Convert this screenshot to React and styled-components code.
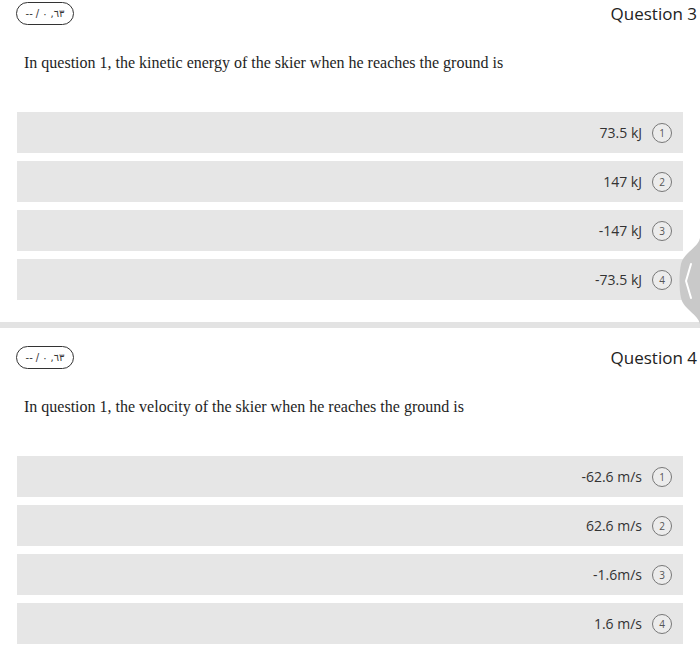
import React from "react";
import styled, { createGlobalStyle } from "styled-components";

const GlobalStyle = createGlobalStyle`
  html, body {
    margin: 0;
    padding: 0;
    background: #ffffff;
  }
  body {
    font-family: "Open Sans", "Noto Sans", sans-serif;
    color: #333333;
  }
`;

const Page = styled.div`
  position: relative;
  width: 700px;
  height: 667px;
  overflow: hidden;
`;

const Section = styled.section`
  padding-top: ${(p) => (p.first ? "2px" : "18px")};
  padding-bottom: 22px;
  border-bottom: ${(p) => (p.last ? "none" : "6px solid #e3e3e3")};
`;

const HeaderRow = styled.div`
  display: flex;
  justify-content: space-between;
  align-items: center;
  padding-left: 16px;
  padding-right: 3px;
  height: 23px;
`;

const Badge = styled.div`
  display: flex;
  align-items: center;
  justify-content: center;
  gap: 3px;
  box-sizing: border-box;
  width: 58px;
  height: 23px;
  border: 1.5px solid #333;
  border-radius: 12px;
  font-family: "DejaVu Sans", "Noto Sans", sans-serif;
  font-size: 10px;
  color: #333;
  direction: ltr;
`;

const QuestionLabel = styled.div`
  font-size: 17px;
  color: #222;
`;

const Prompt = styled.p`
  margin: 26px 0 0 24px;
  font-family: "Liberation Serif", "Times New Roman", serif;
  font-size: 16px;
  line-height: 24px;
  color: #1e1e1e;
`;

const Options = styled.div`
  display: flex;
  flex-direction: column;
  gap: 8px;
  margin: 37px 17px 0 17px;
`;

const Option = styled.div`
  display: flex;
  justify-content: flex-end;
  align-items: center;
  gap: 10px;
  height: 41px;
  padding-right: 11px;
  background: #e6e6e6;
  font-size: 14px;
  color: #333;
`;

const Num = styled.span`
  display: flex;
  align-items: center;
  justify-content: center;
  box-sizing: border-box;
  width: 20px;
  height: 20px;
  border: 1px solid #777;
  border-radius: 50%;
  font-size: 10px;
  color: #555;
  background: #ececec;
`;

const SideTab = styled.div`
  position: absolute;
  right: 0;
  top: 238px;
  width: 24px;
  height: 86px;
`;

const questions = [
  {
    n: 3,
    text: "In question 1, the kinetic energy of the skier when he reaches the ground is",
    options: ["73.5 kJ", "147 kJ", "-147 kJ", "-73.5 kJ"],
  },
  {
    n: 4,
    text: "In question 1, the velocity of the skier when he reaches the ground is",
    options: ["-62.6 m/s", "62.6 m/s", "-1.6m/s", "1.6 m/s"],
  },
];

const badgeParts = ["--", "/", "٠", ",٦٣"];

export default function App() {
  return (
    <Page>
      <GlobalStyle />
      {questions.map((q, i) => (
        <Section key={q.n} first={i === 0} last={i === questions.length - 1}>
          <HeaderRow>
            <Badge>
              {badgeParts.map((p) => (
                <span key={p}>{p}</span>
              ))}
            </Badge>
            <QuestionLabel>Question {q.n}</QuestionLabel>
          </HeaderRow>
          <Prompt>{q.text}</Prompt>
          <Options>
            {q.options.map((o, j) => (
              <Option key={o}>
                <span>{o}</span>
                <Num>{j + 1}</Num>
              </Option>
            ))}
          </Options>
        </Section>
      ))}
      <SideTab>
        <svg width="24" height="86" viewBox="0 0 24 86">
          <path
            d="M24 0 C22 10 8 14 5 26 C3 34 3 52 5 60 C8 72 22 76 24 86 Z"
            fill="#c9c9c9"
          />
          <path
            d="M15 26 L10 43 L15 60"
            fill="none"
            stroke="#ffffff"
            strokeWidth="2"
            strokeLinecap="round"
            strokeLinejoin="round"
          />
        </svg>
      </SideTab>
    </Page>
  );
}
